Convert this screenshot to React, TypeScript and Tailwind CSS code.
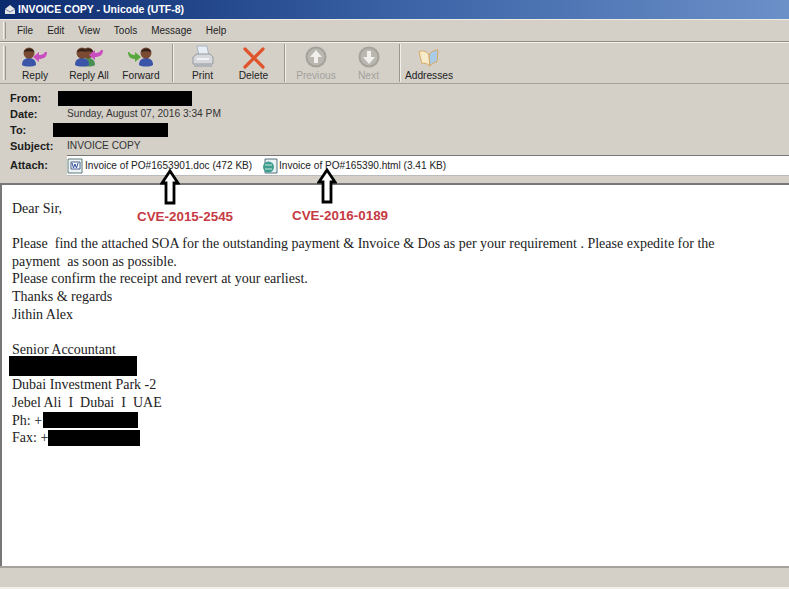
import type { ReactNode } from "react";

const sans = "font-['Liberation_Sans',Arial,sans-serif]";
const menus = ["File", "Edit", "View", "Tools", "Message", "Help"];

function Person({ x = 0, color = "#3b55a8" }: { x?: number; color?: string }) {
  return (
    <g transform={`translate(${x} 0)`}>
      <path d="M1 19c0-5 3-7 7-7s7 2 7 7c-3 2-11 2-14 0z" fill={color} />
      <circle cx="8" cy="7" r="5.5" fill="#7a4a32" />
      <path d="M3 6c1-4 9-5 10 0-3-1-7-1-10 0z" fill="#35221a" />
    </g>
  );
}

function ReplyIcon() {
  return (
    <svg width="28" height="22" viewBox="0 0 28 22">
      <Person />
      <path d="M26 6c0 5-3 7-8 7v3l-6-5 6-5v3c3 0 5-1 6-3z" fill="#c94fc0" />
    </svg>
  );
}

function ReplyAllIcon() {
  return (
    <svg width="30" height="22" viewBox="0 0 30 22">
      <Person x={6} color="#4a8f55" />
      <Person color="#3b55a8" />
      <path d="M29 4c0 5-3 7-8 7v3l-6-5 6-5v3c3 0 5-1 6-3z" fill="#c94fc0" />
    </svg>
  );
}

function ForwardIcon() {
  return (
    <svg width="28" height="22" viewBox="0 0 28 22">
      <Person x={11} />
      <path d="M1 6c0 5 3 7 7 7v3l6-5-6-5v3c-3 0-5-1-6-3z" fill="#58a83e" />
    </svg>
  );
}

function PrintIcon() {
  return (
    <svg width="24" height="24" viewBox="0 0 24 24">
      <path d="M6 1h10l2 10H8z" fill="#e6edf5" stroke="#a9b4c0" />
      <path d="M2 12l4-3h13l3 3v7H2z" fill="#d6d8db" stroke="#96999e" />
      <path d="M3 19h18v3H3z" fill="#b0b3b8" />
      <path d="M6 13h12v2H6z" fill="#f2f2f2" />
    </svg>
  );
}

function DeleteIcon() {
  return (
    <svg className="mt-[3px]" width="22" height="22" viewBox="0 0 22 22">
      <path d="M2 2l18 18M20 2L2 20" stroke="#e0542c" strokeWidth="3.2" strokeLinecap="round" />
    </svg>
  );
}

function NavIcon({ up }: { up: boolean }) {
  return (
    <svg width="22" height="22" viewBox="0 0 22 22">
      <circle cx="11" cy="11" r="10.5" fill="#a5a29c" />
      <circle cx="11" cy="11" r="8.5" fill="#bab7b1" />
      <path
        d={up ? "M11 4l6 7h-4v6H9v-6H5z" : "M11 18l6-7h-4V5H9v6H5z"}
        fill="#f1f0ec"
      />
    </svg>
  );
}

function BookIcon() {
  return (
    <svg className="mt-[2px]" width="24" height="18" viewBox="0 0 24 20">
      <path d="M1 3c5-2 9 0 11 4l1 12c-3-3-6-4-9-3z" fill="#f6eccb" stroke="#d9a455" />
      <path d="M22 1c-4 0-8 2-10 6l1 12c2-3 5-4 8-5z" fill="#a9cbe6" stroke="#d9a455" />
    </svg>
  );
}

function ToolButton({
  icon,
  label,
  width,
  disabled,
}: {
  icon: ReactNode;
  label: string;
  width: string;
  disabled?: boolean;
}) {
  return (
    <div className={`flex flex-col items-center ${width}`}>
      <div className="flex h-[25px] items-center justify-center">{icon}</div>
      <span className={`text-[10.2px] leading-[13px] whitespace-nowrap ${disabled ? "text-[#a3a19b]" : "text-[#222]"}`}>
        {label}
      </span>
    </div>
  );
}

function Divider() {
  return <div className="mx-[4px] h-[38px] w-[2px] shrink-0 border-l border-r border-l-[#99968e] border-r-[#f2f0ea]" />;
}

function Gripper() {
  return <div className="h-[17px] w-[3px] shrink-0 border-l border-r border-l-[#f4f2ec] border-r-[#99968e]" />;
}

function HeaderRow({ label, children }: { label: string; children: ReactNode }) {
  return (
    <div className="flex h-[16px] items-center">
      <span className="w-[67px] shrink-0 pl-[10px] text-[11px] font-bold text-[#1c1c1c]">{label}</span>
      {children}
    </div>
  );
}

function Redact({ className }: { className: string }) {
  return <span className={`inline-block bg-black align-middle ${className}`} />;
}

function UpArrow({ className }: { className: string }) {
  return (
    <svg className={`absolute ${className}`} width="20" height="37" viewBox="0 0 20 37">
      <path d="M10 2L18 14H14V34H6V14H2z" fill="#fff" stroke="#000" strokeWidth="2.8" strokeLinejoin="miter" />
    </svg>
  );
}

export default function App() {
  return (
    <div className={`relative flex h-[589px] w-[789px] flex-col overflow-hidden bg-[#d4d0c8] ${sans}`}>
      {/* title bar */}
      <div className="flex h-[19px] shrink-0 items-center gap-[2px] bg-gradient-to-r from-[#0c2a6e] via-[#3a62a5] to-[#6c90c8] pl-[4px] text-[10.5px] font-bold text-white">
        <svg width="12" height="11" viewBox="0 0 12 11">
          <path d="M1 5l5-4 5 4v5H1z" fill="#e6e6e6" />
          <path d="M1 5l5 3 5-3" fill="none" stroke="#7a8aa8" />
        </svg>
        <span>INVOICE COPY - Unicode (UTF-8)</span>
      </div>

      {/* menu */}
      <div className="flex h-[23px] shrink-0 items-center border-t border-b border-t-[#eeeae2] border-b-[#8f8c85] pl-[3px] text-[10px] text-[#222]">
        <Gripper />
        <div className="ml-[11px] flex gap-[14px]">
          {menus.map((m) => (
            <span key={m}>{m}</span>
          ))}
        </div>
      </div>

      {/* toolbar */}
      <div className="flex h-[42px] shrink-0 items-center border-t border-b border-t-[#f4f2ec] border-b-[#a5a29b] pl-[3px]">
        <div className="h-[34px]">
          <div className="h-full w-[3px] border-l border-r border-l-[#f4f2ec] border-r-[#99968e]" />
        </div>
        <ToolButton icon={<ReplyIcon />} label="Reply" width="w-[58px]" />
        <ToolButton icon={<ReplyAllIcon />} label="Reply All" width="w-[50px]" />
        <ToolButton icon={<ForwardIcon />} label="Forward" width="w-[54px]" />
        <Divider />
        <ToolButton icon={<PrintIcon />} label="Print" width="w-[49px]" />
        <ToolButton icon={<DeleteIcon />} label="Delete" width="w-[53px]" />
        <Divider />
        <ToolButton icon={<NavIcon up />} label="Previous" width="w-[52px]" disabled />
        <ToolButton icon={<NavIcon up={false} />} label="Next" width="w-[53px]" disabled />
        <Divider />
        <ToolButton icon={<BookIcon />} label="Addresses" width="w-[48px]" />
      </div>

      {/* message header */}
      <div className="flex h-[99px] shrink-0 flex-col pt-[6px] text-[10.2px] text-[#333]">
        <HeaderRow label="From:">
          <Redact className="ml-[-9px] h-[15px] w-[134px]" />
        </HeaderRow>
        <HeaderRow label="Date:">
          <span>Sunday, August 07, 2016 3:34 PM</span>
        </HeaderRow>
        <HeaderRow label="To:">
          <Redact className="ml-[-14px] h-[14px] w-[115px]" />
        </HeaderRow>
        <HeaderRow label="Subject:">
          <span>INVOICE COPY</span>
        </HeaderRow>
        <div className="mt-[1px] flex h-[21px] items-center">
          <span className="w-[67px] shrink-0 pl-[10px] text-[11px] font-bold text-[#1c1c1c]">Attach:</span>
          <div className="flex h-[21px] flex-1 items-center border-t border-b border-t-[#777] border-b-[#bbb] bg-white text-[10.1px] text-[#222]">
            <svg width="17" height="16" viewBox="0 0 17 16" className="shrink-0">
              <path d="M1 1h14v14H1z" fill="#eef3f6" stroke="#5a7a78" />
              <path d="M4 4h9v7H4z" fill="#fff" stroke="#46608c" />
              <path d="M5 5l1.5 5L8 6l1.5 4L11 5" fill="none" stroke="#2d4f9e" />
            </svg>
            <span className="ml-[1px] w-[177px] shrink-0 whitespace-nowrap">Invoice of PO#1653901.doc (472 KB)</span>
            <svg width="17" height="16" viewBox="0 0 17 16" className="shrink-0">
              <path d="M3 1h12v14H3z" fill="#e8f1f4" stroke="#52707a" />
              <circle cx="6.5" cy="9" r="5.5" fill="#3f9d8f" />
              <path d="M3 7h7M3 11h7" stroke="#c9e8e0" />
            </svg>
            <span className="whitespace-nowrap">Invoice of PO#165390.html (3.41 KB)</span>
          </div>
        </div>
      </div>

      {/* message body */}
      <div className="flex-1 border-t-2 border-l-2 border-t-[#777] border-l-[#777] bg-white pl-[10px] pt-[15px] font-['Liberation_Serif','Times_New_Roman',serif] text-[14px] leading-[17.6px] text-[#222]">
        <p>Dear Sir,</p>
        <p className="mt-[17.6px] whitespace-pre">
          {"Please  find the attached SOA for the outstanding payment & Invoice & Dos as per your requirement . Please expedite for the\npayment  as soon as possible."}
        </p>
        <p>Please confirm the receipt and revert at your earliest.</p>
        <p>Thanks &amp; regards</p>
        <p>Jithin Alex</p>
        <p className="mt-[17.6px]">Senior Accountant</p>
        <div className="ml-[-3px] mt-[-2px] h-[20px] w-[128px] bg-black" />
        <p>Dubai Investment Park -2</p>
        <p className="whitespace-pre">Jebel Ali  I  Dubai  I  UAE</p>
        <p className="flex items-center">
          Ph: +<Redact className="ml-[1px] h-[16px] w-[95px]" />
        </p>
        <p className="flex items-center">
          Fax: +<Redact className="h-[16px] w-[92px]" />
        </p>
      </div>

      {/* status bar */}
      <div className="h-[23px] shrink-0 border-t-2 border-b-2 border-t-[#a5a29b] border-b-[#f0eee8]" />

      {/* annotations drawn over the screenshot */}
      <UpArrow className="left-[160px] top-[169px]" />
      <UpArrow className="left-[317px] top-[168px]" />
      <span className="absolute left-[137px] top-[207px] text-[13.4px] font-bold text-[#c63a44]">CVE-2015-2545</span>
      <span className="absolute left-[292px] top-[206px] text-[13.4px] font-bold text-[#c63a44]">CVE-2016-0189</span>
    </div>
  );
}
